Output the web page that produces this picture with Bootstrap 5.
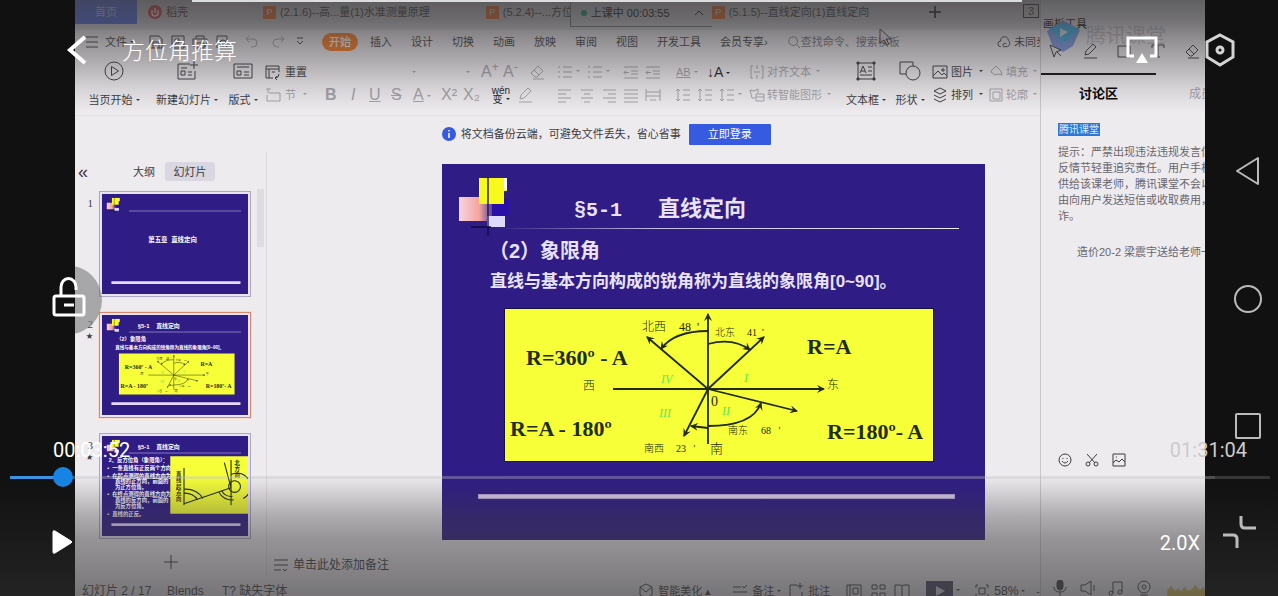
<!DOCTYPE html>
<html lang="zh-CN">
<head>
<meta charset="utf-8">
<meta name="viewport" content="width=device-width, initial-scale=1">
<title>方位角推算</title>
<link href="https://cdn.jsdelivr.net/npm/bootstrap@5.3.0/dist/css/bootstrap.min.css" rel="stylesheet">
<style>
body{background:#111;font-family:"Liberation Sans","Noto Sans CJK SC",sans-serif;font-size:11px;line-height:16px;color:#3d3b40}
button{font:inherit;color:inherit;background:none;border:0;padding:0;white-space:nowrap}
a{color:inherit;text-decoration:none;white-space:nowrap}
svg{display:block;flex:none}
.ic{width:16px;height:16px;fill:none;stroke:currentColor;stroke-width:1}
.ic.big{width:22px;height:22px}
.player{height:100vh;min-height:560px}
.side{width:75px;background:linear-gradient(#111 80%,#232323)}
.video{background:#eeebef}
.shade-top,.shade-bottom{position:absolute;left:0;right:0;pointer-events:none}
.shade-top{top:0;height:112px;background:linear-gradient(rgba(62,61,62,.8),rgba(62,61,62,.7) 18%,rgba(62,61,62,.5) 38%,rgba(62,61,62,.36) 55%,rgba(62,61,62,.13) 80%,rgba(62,61,62,0))}
.shade-bottom{bottom:0;height:120px;background:linear-gradient(rgba(62,61,62,0),rgba(62,61,62,.22) 20%,rgba(62,61,62,.36) 33%,rgba(62,61,62,.5) 52%,rgba(62,61,62,.68))}
.rail{position:absolute;top:0;left:117px;right:183px;height:2px;background:#ddd;z-index:3}
.doctabs{height:30px;background:#dad7db}
.doctabs .home{width:62px;height:24px;background:#4b67f4;color:#c9cfff}
.doctab{height:24px;gap:4px;color:#333}
.ppt{width:13px;height:13px;background:#ff6a1c;color:#fff;font-size:9px;line-height:13px;text-align:center}
.menubar{height:24px;padding-left:10px;gap:19px}
.start-pill{background:#ff7a20;color:#fff;border-radius:10px;width:36px;height:18px;line-height:18px;font-weight:500}
.caret:after{content:"";display:inline-block;border:2px solid transparent;border-top-color:currentColor;margin-left:3px;vertical-align:1px}
.ribbon{height:62px;padding:6px 0 0 14px;border-bottom:1px solid #e2dfe5}
.tool{height:48px;justify-content:space-between}
.line{height:23px}
.off{color:#a5a2a8}
.cell{width:22px}
.grp-font{width:226px;margin-left:22px}
.grp-para{width:186px}
.login{height:36px;gap:5px}
.login button{background:#365be0;color:#fff;width:82px;height:21px;margin-left:3px;border-radius:1px}
.outline{width:192px;border-right:1px solid #dcd9dd;position:relative}
.chip{background:#d8d7e2;border-radius:3px;width:50px;height:19px}
.thumb{width:152px;height:106px;padding:2px;border:1px solid #aaa6be;background:#e9e3f8}
.thumb.on{border:1px solid #d9876c;outline:1px solid #fbd9c9}
.thumb svg{width:100%;height:100%}
.thumbrow{gap:6px;padding-left:8px;margin-bottom:15px}
.num{width:10px;text-align:right;font-family:"Liberation Serif",serif}
.star{font-size:7px;line-height:8px}
.scrollthumb{position:absolute;right:2px;top:37px;width:7px;height:58px;background:#dfdce1}
.stage{padding-top:12px}
.slide{width:543px;height:376px;margin-left:auto;margin-right:55px;background:#2f1c84;color:#e9e2fb;padding:0 26px 0 17px}
.slide h1{font:700 22px/30px "Noto Sans CJK SC",sans-serif;margin:0}
.slide h1 .sec{font-family:"Liberation Mono",monospace;font-size:20px;margin-right:36px}
.slide h2{font-size:20px;line-height:28px;margin:8px 0 0 30px;font-weight:700}
.slide p{font-size:17px;line-height:24px;margin:5px 0 0 31px;font-weight:700;white-space:nowrap}
.logo-row{height:66px;padding-top:14px;gap:65px}
.logo-row h1{padding-top:13px}
.rule{height:1px;margin-left:34px;background:linear-gradient(90deg,#2f1c84,#c7bce4 35%,#eee);margin-top:-2px}
.board{width:430px;height:154px;border:1px solid #17143c;margin:14px 0 0 45px;background:#f6ff37}
.bar{height:5px;background:#d9cdec;margin:32px 4px 0 19px;border:1px solid #b4a6d8}
.notes{height:22px;padding-left:6px;font-size:12px}
.status{height:30px;font-size:12px}
.chat{width:165px;border-left:1px solid #c9c6cb}
.chat .tools{height:30px}
.chat p{margin:0;white-space:nowrap;color:#69666c}
.tag{background:#2d78d2;color:#dcecff;line-height:13px;padding:0 1px;font-size:10px;align-self:flex-start}
.side-r{width:73px}
/* player controls lie over the video */
.ctl{position:absolute;color:#fff;z-index:5}
.ctl svg{fill:none;stroke:currentColor;stroke-width:3}
.clock{font:20px/24px Roboto,sans-serif;top:438px}
.title{left:122px;top:34px;font:300 23px/30px "Noto Sans CJK SC",sans-serif}
.disc{position:absolute;left:36px;top:266px;width:66px;height:68px;border-radius:50%;background:rgba(120,120,120,.6);clip-path:inset(0 0 0 39px);z-index:4}
.seek{appearance:none;-webkit-appearance:none;left:10px;right:8px;width:calc(100% - 18px);top:467px;height:20px;margin:0;background:linear-gradient(90deg,#3d93e2 4.2%,rgba(190,190,190,.35) 4.2% 95.6%,rgba(120,120,120,.35) 95.6%) center/100% 3px no-repeat}
.seek::-webkit-slider-thumb{-webkit-appearance:none;width:20px;height:20px;border-radius:50%;background:#1883e4}
</style>
</head>
<body>
<svg width="0" height="0" class="position-absolute">
<defs>
<marker id="ah" markerWidth="8" markerHeight="8" refX="7" refY="4" orient="auto-start-reverse" markerUnits="userSpaceOnUse" viewBox="0 0 8 8"><path d="M0 0L8 4L0 8L3 4Z" fill="#222b10"/></marker>
<linearGradient id="pk"><stop stop-color="#f5d5e4"/><stop offset=".6" stop-color="#f6a39a"/><stop offset="1" stop-color="#4a39a8"/></linearGradient>
<symbol id="mark4" viewBox="0 0 50 58"><path d="M0 19h34v24H0z" fill="url(#pk)"/><path d="M28 38h18v11H28z" fill="#dcd9fb"/><path d="M33 21h18v17H33z" fill="#2a10a6"/><path d="M20 0h28v13h-3v13H20z" fill="#f8fa1b"/><path d="M45 0h3v12h-3z" fill="#fff"/><path d="M29 0v58M12 49h20" stroke="#120b3c" stroke-width="1.3"/></symbol>
<symbol id="lst" viewBox="0 0 16 16"><path d="M1 3h2M1 8h2M1 13h2M6 3h9M6 8h9M6 13h9"/></symbol>
<symbol id="ind" viewBox="0 0 16 16"><path d="M1 3h14M8 7h7M8 10h7M1 14h14M6 8.500H1m2-2l-2 2 2 2"/></symbol>
<symbol id="al" viewBox="0 0 16 16"><path d="M1 3h13M1 7h8M1 11h13M1 15h8"/></symbol>
<symbol id="ac" viewBox="0 0 16 16"><path d="M2 3h12M5 7h6M2 11h12M5 15h6"/></symbol>
<symbol id="ar" viewBox="0 0 16 16"><path d="M2 3h13M7 7h8M2 11h13M7 15h8"/></symbol>
<symbol id="aj" viewBox="0 0 16 16"><path d="M1 3h14M1 7h14M1 11h14M1 15h14"/></symbol>
<symbol id="sp" viewBox="0 0 16 16"><path d="M3 2v12M1 4l2-2 2 2M1 12l2 2 2-2M8 3h7M8 8h7M8 13h7"/></symbol>
<symbol id="pen" viewBox="0 0 16 16"><path d="M3 12l1-4 7-7 3 3-7 7zM2 15h13"/></symbol>
<symbol id="er" viewBox="0 0 16 16"><path d="M2 9l7-7 5 5-6 6H6zM5 6l5 5M4 15h11"/></symbol>
<symbol id="pic" viewBox="0 0 16 16"><path d="M1 2h14v12H1zM1 12l5-5 4 4 2-2 3 3M10 5h2v2h-2z"/></symbol>
<symbol id="dia" viewBox="0 0 428 152">
<g stroke="#222b10" stroke-width="1.800" fill="none"><path d="M203 135V5" marker-end="url(#ah)"/><path d="M108 80H319" marker-end="url(#ah)"/><path d="M203 80L142 28" marker-end="url(#ah)"/><path d="M203 80L259 28" marker-end="url(#ah)"/><path d="M203 80L292 102" marker-end="url(#ah)"/><path d="M203 80L179 127" marker-end="url(#ah)"/><path d="M203 22Q169 22 156 40" marker-end="url(#ah)"/><path d="M203 35Q228 28 245 41" marker-end="url(#ah)"/><path d="M203 117Q248 117 256 94" marker-end="url(#ah)"/><path d="M203 119L186 117" marker-end="url(#ah)"/></g>
<g fill="#222b10" font-family="Liberation Serif,Noto Sans CJK SC,serif"><g font-size="22" font-weight="700"><text x="21" y="56">R=360º - A</text><text x="302" y="45">R=A</text><text x="5" y="127">R=A - 180º</text><text x="322" y="130">R=180º- A</text></g><g font-size="12" font-weight="300"><text x="137" y="22">北西</text><text x="174" y="22">48&#160; '</text><text x="78" y="81">西</text><text x="322" y="80">东</text><text x="206" y="97" font-size="14">0</text><text x="205" y="144" font-size="13">南</text></g><g font-size="10" font-weight="300"><text x="210" y="27">北东</text><text x="242" y="27">41&#160; '</text><text x="223" y="125">南东</text><text x="256" y="125">68&#160;&#160; '</text><text x="139" y="143">南西</text><text x="171" y="143">23&#160;&#160; '</text></g></g>
<g fill="#5bea5b" font-family="Liberation Serif,serif" font-style="italic" font-size="12"><text x="156" y="74">IV</text><text x="239" y="73">I</text><text x="154" y="108">III</text><text x="217" y="106">II</text></g>
</symbol>
</defs></svg>

<div class="player position-relative d-flex overflow-hidden">
  <div class="side flex-shrink-0"></div>
  <main class="video position-relative d-flex flex-grow-1 overflow-hidden" style="min-width:0">
    <div class="d-flex flex-column flex-grow-1 overflow-hidden" style="min-width:0">
      <nav class="doctabs d-flex flex-shrink-0" aria-label="文档">
        <a href="#" class="home d-flex align-items-center justify-content-center">首页</a>
        <a href="#" class="doctab d-flex align-items-center" style="margin-left:11px"><svg width="14" height="14" viewBox="0 0 14 14"><circle cx="7" cy="7" r="7" fill="#e8353e"/><path d="M4 5v3q0 3 3 3t3-3V5M7 3v5" stroke="#fff" stroke-width="1.500" fill="none"/></svg>稻壳</a>
        <a href="#" class="doctab d-flex align-items-center" style="margin-left:75px"><span class="ppt">P</span>(2.1.6)--高...量(1)水准测量原理</a>
        <a href="#" class="doctab d-flex align-items-center" style="margin-left:56px"><span class="ppt">P</span><span class="overflow-hidden" style="width:67px">(5.2.4)--...方位</span></a>
        <div class="d-flex align-items-center flex-shrink-0 border-start border-bottom border-secondary text-black" style="width:142px;height:27px;padding-left:10px;gap:4px"><svg width="6" height="6"><circle cx="3" cy="3" r="3" fill="#00a070"/></svg>上课中 00:03:55<svg class="ic ms-auto me-2" style="width:10px;height:10px" viewBox="0 0 10 10"><path d="M1 7l4-4 4 4"/></svg></div>
        <a href="#" class="doctab d-flex align-items-center"><span class="ppt">P</span>(5.1.5)--直线定向(1)直线定向</a>
        <button class="doctab text-black" aria-label="新建" style="margin-left:60px"><svg class="ic" style="width:12px" viewBox="0 0 12 12"><path d="M6 0v12M0 6h12" stroke-width="1.500"/></svg></button>
        <span class="border border-dark text-center ms-auto" style="width:16px;height:14px;line-height:12px;margin-top:4px;margin-right:1px">3</span>
      </nav>

      <nav class="menubar d-flex align-items-center flex-shrink-0" aria-label="菜单">
        <div class="d-flex align-items-center" style="gap:6px;width:218px">
          <svg class="ic" style="width:14px" viewBox="0 0 14 16"><path d="M1 3h12M1 8h12M1 13h12"/></svg><button class="caret me-2">文件</button>
          <svg class="ic" viewBox="0 0 16 16"><path d="M2 2h9l3 3v9H2zM5 14V8h6v6"/></svg><svg class="ic" viewBox="0 0 16 16"><path d="M2 2h12v12H2zM5 12V5h4v4H5"/></svg><svg class="ic" viewBox="0 0 16 16"><path d="M4 5V2h8v3M4 12H1V5h14v7h-3M4 9h8v5H4z"/></svg><svg class="ic" viewBox="0 0 16 16"><path d="M3 14V2h10v7"/><circle cx="9" cy="9" r="3"/><path d="M11 11l3 3"/></svg>
          <svg class="ic off ms-2" viewBox="0 0 16 16"><path d="M5 2L2 5l3 3M2 5h7a4 4 0 010 8H7"/></svg><svg class="ic off ms-1" viewBox="0 0 16 16"><path d="M11 2l3 3-3 3M14 5H7a4 4 0 000 8h2"/></svg><svg class="ic" viewBox="0 0 16 16"><path d="M5 4h6M5 7l3 3 3-3"/></svg>
        </div>
        <button class="start-pill" style="margin-right:-7px">开始</button>
        <a href="#">插入</a><a href="#">设计</a><a href="#">切换</a><a href="#">动画</a><a href="#">放映</a><a href="#">审阅</a><a href="#">视图</a><a href="#">开发工具</a><a href="#">会员专享›</a>
        <span class="d-flex align-items-center text-nowrap" style="color:#77747a"><svg class="ic" style="width:14px" viewBox="0 0 16 16"><circle cx="7" cy="7" r="5"/><path d="M11 11l4 4"/></svg>查找命令、搜索模板</span>
        <span class="d-flex align-items-center ms-auto text-nowrap overflow-hidden flex-shrink-0" style="width:43px;gap:2px"><svg class="ic" style="width:15px" viewBox="0 0 16 16"><path d="M4 13a3 3 0 010-6 4 4 0 018-1 4 4 0 01-1 7H7a2 2 0 013-3"/></svg>未同步</span>
      </nav>

      <section class="ribbon d-flex flex-shrink-0" aria-label="工具栏">
        <button class="tool d-flex flex-column align-items-center" style="width:50px"><svg class="ic big" viewBox="0 0 22 22"><circle cx="11" cy="11" r="9"/><path d="M8.500 6.500l7 4.500-7 4.500z"/></svg><span class="caret">当页开始</span></button>
        <button class="tool d-flex flex-column align-items-center" style="width:60px;margin-left:18px"><svg class="ic big" viewBox="0 0 22 22"><path d="M14 4H2v15h17v-8M18 1v8M14 5h8M5 8h6M5 11h4v4H5zM12 12h4M12 15h4"/></svg><span class="caret">新建幻灯片</span></button>
        <button class="tool d-flex flex-column align-items-center" style="width:32px;margin-left:10px"><svg class="ic big" viewBox="0 0 22 22"><path d="M2 4h18v14H2zM5 7h12M5 11h4v4H5zM12 12h5M12 15h5"/></svg><span class="caret">版式</span></button>
        <div style="margin-left:6px;width:44px"><button class="line d-flex align-items-center gap-1"><svg class="ic" viewBox="0 0 16 16"><path d="M8 14H1V2h13v6M1 5h13M4 5v9M7 8h3M14 10q0 4-4 4m2-2l-2 2 2 2"/></svg>重置</button><button class="line d-flex align-items-center gap-1 off caret"><svg class="ic" viewBox="0 0 16 16"><path d="M1 2h5M3 2v4M4 6h11v8H2V8"/></svg>节</button></div>
        <div class="grp-font off" style="margin-left:16px">
          <div class="line d-flex align-items-center" style="padding-left:84px"><span class="caret" style="width:54px"></span><span class="caret" style="width:18px"></span><span class="fs-6 cell">A<sup>+</sup></span><span class="fs-6 cell">A<sup>-</sup></span><svg class="ic ms-1"><use href="#er"/></svg></div>
          <div class="line d-flex align-items-center fs-6"><b class="cell">B</b><i class="cell ps-1">I</i><u class="cell">U</u><s class="cell">S</s><u class="cell caret" style="width:28px">A</u><span class="cell">X²</span><span class="cell">X₂</span><span class="caret text-dark text-center" style="font-size:10px;line-height:9px;width:32px">wén<br>变</span><svg class="ic"><use href="#pen"/></svg></div>
        </div>
        <div class="grp-para off" style="margin-left:6px">
          <div class="line d-flex align-items-center"><span class="caret d-flex align-items-center" style="width:30px"><svg class="ic"><use href="#lst"/></svg></span><span class="caret d-flex align-items-center" style="width:36px"><svg class="ic"><use href="#lst"/></svg></span><svg class="ic"><use href="#ind"/></svg><svg class="ic" style="margin-left:6px"><use href="#ind"/></svg><u class="caret" style="margin-left:15px;width:31px">AB</u><span class="caret text-dark" style="font-size:14px">↓A</span></div>
          <div class="line d-flex align-items-center" style="gap:6px"><svg class="ic"><use href="#al"/></svg><svg class="ic"><use href="#ac"/></svg><svg class="ic"><use href="#ar"/></svg><svg class="ic"><use href="#aj"/></svg><svg class="ic" viewBox="0 0 16 16"><path d="M1 2v12M15 2v12M1 5h14M1 9h14M5 13h6"/></svg><svg class="ic ms-2"><use href="#sp"/></svg><svg class="ic"><use href="#sp"/></svg><span class="caret d-flex align-items-center"><svg class="ic"><use href="#sp"/></svg></span></div>
        </div>
        <div class="off" style="width:84px;margin-left:6px"><button class="line d-flex align-items-center caret" style="gap:2px"><svg class="ic" viewBox="0 0 16 16"><path d="M4 2H2v12h2M12 2h2v12h-2M5 8h6M8 1v4M8 11v4"/></svg>对齐文本</button><button class="line d-flex align-items-center caret" style="gap:2px"><svg class="ic" viewBox="0 0 16 16"><path d="M6 11H3L1 3l4 1 4-2v4M7 7h8v7H7zM7 10h8"/></svg>转智能图形</button></div>
        <button class="tool d-flex flex-column align-items-center" style="width:40px;margin-left:13px"><svg class="ic big" viewBox="0 0 22 22"><path d="M3 3h16v16H3zM13 7h4M13 11h4M5 15h12M5 13l3-7 3 7M6 11h4"/><path d="M2 2h2v2H2zM18 2h2v2h-2zM2 18h2v2H2zM18 18h2v2h-2z" fill="currentColor"/></svg><span class="caret">文本框</span></button>
        <button class="tool d-flex flex-column align-items-center" style="width:30px;margin-left:9px"><svg class="ic big" viewBox="0 0 22 22"><path d="M7 14H1V2h13v4"/><circle cx="14" cy="13" r="7"/></svg><span class="caret">形状</span></button>
        <div style="margin-left:7px;width:56px"><button class="line d-flex align-items-center caret" style="gap:3px"><svg class="ic"><use href="#pic"/></svg>图片</button><button class="line d-flex align-items-center caret" style="gap:3px"><svg class="ic" viewBox="0 0 16 16"><path d="M8 1l6 3-6 3-6-3zM2 8l6 3 6-3M2 12l6 3 6-3"/></svg>排列</button></div>
        <div class="off"><button class="line d-flex align-items-center caret" style="gap:2px"><svg class="ic" viewBox="0 0 16 16"><path d="M3 7l5-5 5 5 1 4-4-1-3 1-4-3z"/></svg>填充</button><button class="line d-flex align-items-center caret" style="gap:2px"><svg class="ic" viewBox="0 0 16 16"><path d="M2 2h12v12H2zM5 5h7v7H5z"/></svg>轮廓</button></div>
      </section>

      <div class="login d-flex align-items-center flex-shrink-0" style="padding-left:38%">
        <svg width="14" height="14" viewBox="0 0 14 14"><circle cx="7" cy="7" r="7" fill="#365be0"/><path d="M7 3v1.500M7 6v5" stroke="#fff" stroke-width="1.500"/></svg>
        <span class="text-nowrap">将文档备份云端，可避免文件丢失，省心省事</span><button>立即登录</button>
      </div>

      <div class="d-flex flex-shrink-0" style="height:424px">
        <aside class="outline d-flex flex-column flex-shrink-0">
          <div class="d-flex align-items-center flex-shrink-0" style="height:39px;padding-left:3px"><button style="width:55px;text-align:left;font-size:18px">«</button><button style="width:32px;text-align:left">大纲</button><button class="chip">幻灯片</button></div>
          <div class="thumbrow d-flex"><span class="num pt-1">1</span><div class="thumb"><svg viewBox="0 0 543 376" preserveAspectRatio="none"><path d="M0 0h543v376H0z" fill="#2f1c84"/><use href="#mark4" x="17" y="14" width="50" height="58"/><path d="M100 64H517" stroke="#9e90cc" stroke-width="3"/><path d="M35 333H515" stroke="#e5dbf7" stroke-width="10"/><text x="172" y="180" font-size="24" font-weight="700" fill="#fff">第五章&#160; 直线定向</text></svg></div></div>
          <div class="thumbrow d-flex"><span class="num pt-1">2<span class="star d-block">★</span></span><div class="thumb on"><svg viewBox="0 0 543 376" preserveAspectRatio="none"><path d="M0 0h543v376H0z" fill="#2f1c84"/><use href="#mark4" x="17" y="14" width="50" height="58"/><path d="M100 64H517" stroke="#9e90cc" stroke-width="3"/><path d="M35 333H515" stroke="#e5dbf7" stroke-width="10"/><g fill="#fff" font-weight="700"><text x="133" y="50" font-size="22">§5-1&#160;&#160;&#160; 直线定向</text><text x="53" y="96" font-size="20">（2）象限角</text><text x="49" y="126" font-size="17">直线与基本方向构成的锐角称为直线的象限角[0~90]。</text></g><path d="M63 145h430v154H63z" fill="#f6ff37"/><use href="#dia" x="64" y="146" width="428" height="152"/></svg></div></div>
          <div class="thumbrow d-flex"><span class="num pt-1">3<span class="star d-block">★</span></span><div class="thumb"><svg viewBox="0 0 543 376" preserveAspectRatio="none"><path d="M0 0h543v376H0z" fill="#2f1c84"/><use href="#mark4" x="17" y="14" width="50" height="58"/><path d="M100 64H517" stroke="#9e90cc" stroke-width="3"/><path d="M35 333H515" stroke="#e5dbf7" stroke-width="10"/><g fill="#fff" font-weight="700" font-size="20"><text x="133" y="48" font-size="22">§5-1&#160;&#160;&#160; 直线定向</text><text x="25" y="96">2、反方位角（象限角）：</text><text x="20" y="126">•&#160; 一条直线有正反两个方向。</text><text x="20" y="157">•&#160; 在起点测得的直线方向为</text><text x="48" y="178">直线的正方向，前面的</text><text x="48" y="199">为正方位角。</text><text x="20" y="227">•&#160; 在终点测得的直线方向为</text><text x="48" y="248">直线的反方向，前面的</text><text x="48" y="269">为反方位角。</text><text x="20" y="300">•&#160; 直线的正反。</text></g><path d="M254 76h289v216H254z" fill="#f6ff37"/><g fill="none" stroke="#222b10" stroke-width="4"><path d="M305 260V120M305 255L480 195M480 260V90M480 195L455 100"/><path d="M305 215a50 40 0 0150 25M305 200a70 60 0 0170 35"/><circle cx="493" cy="190" r="22"/><path d="M480 145a48 48 0 1145 90M435 210a50 45 0 0055 30M445 205a38 34 0 0040 22"/></g><g font-size="20" font-weight="700" fill="#222b10"><text x="275" y="150">直</text><text x="275" y="174">线</text><text x="275" y="198">起</text><text x="275" y="222">点</text><text x="275" y="246">向</text><text x="493" y="110">北</text><text x="493" y="132">方</text><text x="493" y="154">向</text></g></svg></div></div>
          <button aria-label="新建幻灯片"><svg class="ic mx-auto" viewBox="0 0 16 16"><path d="M8 1v14M1 8h14"/></svg></button>
          <span class="scrollthumb"></span>
        </aside>
        <div class="d-flex flex-column flex-grow-1">
          <div class="stage">
            <article class="slide">
              <div class="logo-row d-flex"><svg width="50" height="58"><use href="#mark4"/></svg><h1><span class="sec">§5-1</span>直线定向</h1></div>
              <div class="rule"></div>
              <h2>（2）象限角</h2>
              <p>直线与基本方向构成的锐角称为直线的象限角[0~90]。</p>
              <div class="board"><svg width="100%" height="100%"><use href="#dia"/></svg></div>
              <div class="bar"></div>
            </article>
          </div>
          <div class="notes d-flex align-items-center gap-1 mt-auto"><svg class="ic" viewBox="0 0 16 16"><path d="M1 3h14M1 8h14M1 13h7M10 12l2 2 2-2"/></svg>单击此处添加备注</div>
        </div>
      </div>
      <footer class="status d-flex align-items-center flex-shrink-0 text-nowrap" style="padding-left:7px">
        <span style="width:85px">幻灯片 2 / 17</span><span style="width:55px">Blends</span><span>T? 缺失字体</span>
        <div class="d-flex align-items-center ms-auto" style="gap:4px;font-size:11px">
          <svg class="ic" viewBox="0 0 16 16"><path d="M2 4l6-3 6 3v8l-6 3-6-3zM2 4l6 5 6-5"/></svg><span style="width:70px">智能美化 ▴</span>
          <svg class="ic" viewBox="0 0 16 16"><path d="M1 4h8M1 9h14M1 14h14M10 3l2 2 3-3"/></svg><span class="caret" style="width:32px">备注</span>
          <svg class="ic" viewBox="0 0 16 16"><path d="M9 2H2v12h12V9M12 0v6M9 3h6"/></svg><span style="width:34px">批注</span>
          <svg class="ic" viewBox="0 0 16 16"><path d="M1 2h14v12H1zM4 2v12M7 5h5v6H7z"/></svg><svg class="ic ms-1" viewBox="0 0 16 16"><path d="M2 2h5v4H2zM10 2h5v4h-5zM2 10h5v4H2zM10 10h5v4h-5z"/></svg><svg class="ic ms-1" viewBox="0 0 16 16"><path d="M1 2h6l1 1 1-1h6v12H1zM8 3v11"/></svg>
          <button class="caret" aria-label="放映" style="margin-left:12px"><svg class="d-inline-block" width="27" height="20"><path d="M0 0h27v20H0z" fill="#454360"/><path d="M10 5l9 5-9 5z" fill="#d5d5e5"/></svg></button>
          <svg class="ic" style="margin-left:10px" viewBox="0 0 16 16"><path d="M4 2H2v3M12 2h2v3M2 11v3h2M14 11v3h-2M5 5h6v6H5z"/></svg><span class="caret" style="width:38px;font-size:12px">58%</span><span>-</span>
        </div>
      </footer>
    </div>

    <aside class="chat d-flex flex-column flex-shrink-0 overflow-hidden position-relative">
      <div class="text-black d-flex" style="height:36px;padding:16px 0 0 2px">画板工具</div>
      <div class="position-absolute d-flex align-items-center" style="left:5px;top:20px"><svg width="35" height="32" viewBox="0 0 35 32"><path d="M1 11L17 0l17 10-7 16-10 6L6 25z" fill="#7b9bea"/><path d="M3 9q16-12 30 1L18 23z" fill="#38b4f6"/><path d="M14 8l8 4-8 5z" fill="#d8eefa"/></svg><span style="color:#a7a4aa;font-size:20px;margin-left:5px;white-space:nowrap;opacity:.6">腾讯课堂</span></div>
      <div class="tools d-flex align-items-center position-relative" style="padding-left:7px;gap:18px">
        <svg class="ic" viewBox="0 0 16 16"><path d="M2 2l4 12 2-5 5-2zM9 9l4 4"/></svg><svg class="ic"><use href="#pen"/></svg><svg class="ic" viewBox="0 0 16 16"><path d="M2 3h12v11H2z"/></svg><svg class="ic" viewBox="0 0 16 16"><path d="M2 5V2h12v3M8 2v12M6 14h4"/></svg><svg class="ic"><use href="#er"/></svg>
      </div>
      <div class="d-flex position-relative"><a href="#" class="text-black fw-bold text-center flex-shrink-0" style="width:115px;border-top:2px solid #111;padding-top:11px;margin-top:7px;font-size:13px">讨论区</a><a href="#" class="off" style="margin:20px 0 0 33px;font-size:12px">成员</a></div>
      <div class="d-flex flex-column" style="padding:21px 0 0 17px">
        <span class="tag">腾讯课堂</span>
        <p class="mt-2">提示：严禁出现违法违规发言信息，违<br>反情节轻重追究责任。用户手机号码将<br>供给该课老师，腾讯课堂不会以任何理<br>由向用户发送短信或收取费用，谨防欺<br>诈。</p>
        <p style="margin-top:20px;margin-left:19px">造价20-2 梁震宇送给老师一朵花</p>
      </div>
      <div class="d-flex" style="gap:11px;padding-left:16px;margin-top:192px"><svg class="ic" viewBox="0 0 16 16"><circle cx="8" cy="8" r="6"/><path d="M6 6v1M10 6v1M5 9q3 4 6 0"/></svg><svg class="ic" viewBox="0 0 16 16"><path d="M3 2l8 9M13 2l-8 9"/><circle cx="4" cy="12" r="2"/><circle cx="12" cy="12" r="2"/></svg><svg class="ic" viewBox="0 0 16 16"><path d="M2 2h12v12H2zM2 11l3-3 3 2 3-3 3 3M5 5h1"/></svg></div>
      <div class="d-flex align-items-end mt-auto" style="gap:12px;padding-left:11px"><svg class="ic" viewBox="0 0 16 16"><rect x="5" y="0" width="6" height="10" rx="3" fill="currentColor"/><path d="M2 7q0 5 6 5t6-5M8 12v4"/></svg><svg class="ic" viewBox="0 0 16 16"><path d="M1 5h4l6-4v14l-6-4H1zM14 5v6"/></svg><svg class="ic" viewBox="0 0 16 16"><path d="M5 13V2h9v10"/><circle cx="3" cy="13" r="2"/><circle cx="12" cy="12" r="2"/></svg><svg class="ic" viewBox="0 0 16 16"><circle cx="8" cy="7" r="6"/><circle cx="8" cy="7" r="2"/><path d="M4 15h8"/></svg><svg width="46" height="12" viewBox="0 0 46 14"><path d="M0 14V7l5-5 4 6 4-3 3 4 4-6 4 5 5-2 4-5 4 6 5-3 4 4v6z" fill="#d5bc54"/></svg></div>
    </aside>
    <div class="shade-top"></div><div class="shade-bottom"></div><div class="rail"></div>
  </main>
  <div class="side side-r flex-shrink-0"></div>

  <span class="disc"></span>
  <button class="ctl" aria-label="返回" style="left:66px;top:34px"><svg width="22" height="32"><path d="M19 3L4 16l15 13" stroke-width="4"/></svg></button>
  <h1 class="ctl title m-0">方位角推算</h1>
  <svg class="position-absolute" style="left:879px;top:28px;z-index:5" width="14" height="19" viewBox="0 0 14 19"><path d="M1 1v14l4-3 3 5 2-1-3-5h5z" fill="#8a868c" stroke="#3e3c40"/></svg>
  <button class="ctl" aria-label="解锁" style="left:52px;top:276px"><svg width="34" height="42"><rect x="2" y="20" width="30" height="19" rx="2"/><path d="M9 20V11a7 8 0 0115 0v3M12 29h10"/></svg></button>
  <button class="ctl" aria-label="投屏" style="left:1125px;top:34px"><svg width="34" height="32"><path d="M9 22H3V4h28v18h-6"/><path d="M17 19l6 10H11z" fill="#fff" stroke="none"/></svg></button>
  <button class="ctl" aria-label="设置" style="right:42px;top:33px;color:#d5d5d5"><svg width="32" height="34"><path d="M16 2l13 7v15l-13 8-13-8V9z"/><circle cx="16" cy="17" r="3"/></svg></button>
  <button class="ctl" aria-label="系统返回" style="right:16px;top:156px;color:#bbb"><svg width="28" height="30"><path d="M24 2v26L3 15z" stroke-width="2" stroke-linejoin="round"/></svg></button>
  <button class="ctl" aria-label="主屏" style="right:15px;top:284px;color:#bbb"><svg width="30" height="30"><circle cx="15" cy="15" r="13" stroke-width="2"/></svg></button>
  <button class="ctl" aria-label="最近任务" style="right:16px;top:412px;color:#bbb"><svg width="28" height="28"><rect x="2" y="2" width="24" height="24" rx="1" stroke-width="2"/></svg></button>
  <span class="ctl clock" style="left:53px">00:03:52</span>
  <span class="ctl clock" style="right:31px;color:#ccc">01:31:04</span>
  <input class="ctl seek" type="range" min="0" max="5464" value="190" aria-label="进度">
  <button class="ctl" aria-label="播放" style="left:50px;top:528px"><svg width="26" height="28"><path d="M3 4v20q0 2 2 1l16-10q2-1 0-2L5 3Q3 2 3 4z" fill="#fff" stroke-width="1"/></svg></button>
  <button class="ctl" style="right:78px;top:531px;font:20px/24px Roboto,sans-serif">2.0X</button>
  <button class="ctl" aria-label="退出全屏" style="right:20px;top:514px;color:#bbb"><svg width="36" height="36"><path d="M19 2v8q0 4 4 4h11M1 21h10q4 0 4 4v9"/></svg></button>
</div>
<script src="https://cdn.jsdelivr.net/npm/bootstrap@5.3.0/dist/js/bootstrap.bundle.min.js"></script>
</body>
</html>
